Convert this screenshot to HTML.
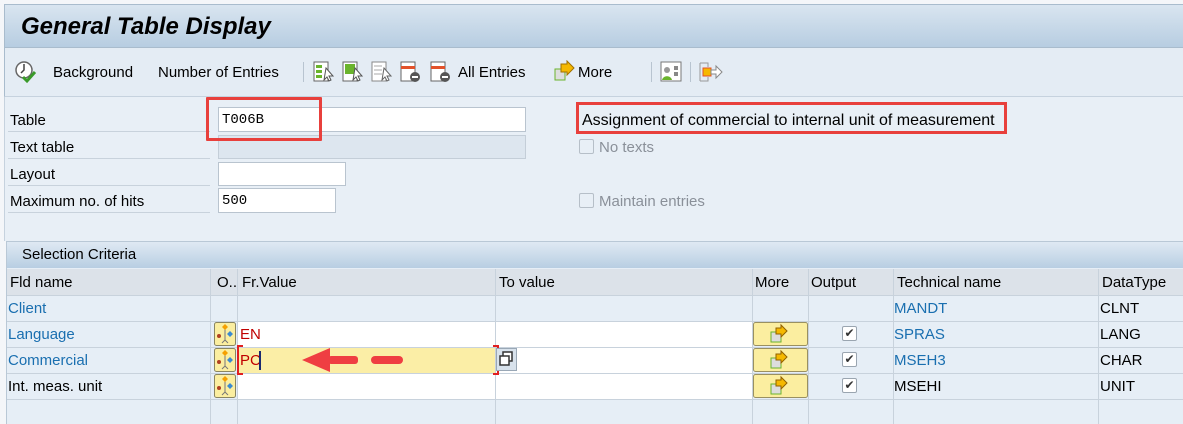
<!DOCTYPE html>
<html><head><meta charset="utf-8"><style>
*{margin:0;padding:0;box-sizing:border-box}
body{width:1183px;height:424px;overflow:hidden;background:#f4f6f9;font-family:"Liberation Sans",Tahoma,sans-serif;font-size:15px;color:#000;position:relative}
.a{position:absolute}
.t{position:absolute;white-space:nowrap;line-height:18px;margin-top:1px}
.lnk{color:#1a6fb0}
.inp{position:absolute;background:#fff;border:1px solid #b9c4cf}
.cb{position:absolute;width:15px;height:15px;border:1px solid #9aa5b0;background:#fff;border-radius:2px;font-size:12px;line-height:13px;text-align:center;color:#333}
.vl{position:absolute;width:1px;background:#c8d2dc}
.hl{position:absolute;height:1px;background:#c8d2dc}
</style></head><body>
<!-- title -->
<div class="a" style="left:4px;top:4px;width:1179px;height:44px;background:linear-gradient(#d9e5f0,#b7cde1);border:1px solid #a9bccd;border-right:none"></div>
<div class="t" style="left:21px;top:12px;font-size:24px;font-weight:bold;font-style:italic;line-height:28px">General Table Display</div>
<!-- toolbar -->
<div class="a" style="left:4px;top:48px;width:1179px;height:49px;background:#e4ecf4;border-left:1px solid #a9bccd;border-bottom:1px solid #c6d2de"></div>
<svg class="a" style="left:14px;top:60px" width="24" height="24" viewBox="0 0 24 24"><circle cx="10" cy="10" r="8" fill="#fff" stroke="#666" stroke-width="1.5"/><path d="M10 4v6l-3 3" stroke="#444" stroke-width="1.5" fill="none"/><path d="M9 17l4 4 8-9" stroke="#3a9a2a" stroke-width="3" fill="none"/></svg>
<div class="t" style="left:53px;top:63px">Background</div>
<div class="t" style="left:158px;top:63px">Number of Entries</div>
<div class="a" style="left:303px;top:62px;width:1px;height:20px;background:#b8c4d0"></div>
<svg class="a" style="left:312px;top:60px" width="150" height="24" viewBox="0 0 150 24">
<rect x="2" y="2" width="14" height="19" fill="#fff" stroke="#666"/><rect x="4" y="5" width="6" height="3" fill="#6ab42c"/><rect x="4" y="10" width="6" height="3" fill="#6ab42c"/><rect x="4" y="15" width="6" height="3" fill="#6ab42c"/><path d="M14 8l7 8h-4l2 4-2 1-2-4-3 3z" fill="#fff" stroke="#555"/>
<rect x="31" y="2" width="14" height="19" fill="#fff" stroke="#666"/><rect x="33" y="4" width="10" height="10" fill="#6ab42c"/><path d="M43 8l7 8h-4l2 4-2 1-2-4-3 3z" fill="#fff" stroke="#555"/>
<rect x="60" y="2" width="14" height="19" fill="#fff" stroke="#888"/><path d="M62 6h8M62 10h8M62 14h8" stroke="#aaa"/><path d="M72 8l7 8h-4l2 4-2 1-2-4-3 3z" fill="#fff" stroke="#666"/>
<rect x="89" y="2" width="14" height="19" fill="#fff" stroke="#666"/><rect x="89" y="6" width="14" height="3" fill="#e2522a"/><circle cx="103" cy="17" r="5" fill="#555"/><path d="M100 17h6" stroke="#fff" stroke-width="2"/>
<rect x="119" y="2" width="14" height="19" fill="#fff" stroke="#666"/><rect x="119" y="6" width="14" height="3" fill="#e2522a"/><circle cx="133" cy="17" r="5" fill="#555"/><path d="M130 17h6" stroke="#fff" stroke-width="2"/>
</svg>
<div class="t" style="left:458px;top:63px">All Entries</div>
<svg class="a" style="left:553px;top:60px" width="22" height="22" viewBox="0 0 22 22"><rect x="2" y="9" width="10" height="11" fill="#ddd" stroke="#6ab42c"/><path d="M8 4h6V1l7 7-7 7v-3H8z" fill="#f5b800" stroke="#a07000"/></svg>
<div class="t" style="left:578px;top:63px">More</div>
<div class="a" style="left:651px;top:62px;width:1px;height:20px;background:#b8c4d0"></div>
<svg class="a" style="left:659px;top:60px" width="24" height="24" viewBox="0 0 24 24"><rect x="2" y="2" width="20" height="19" fill="#fff" stroke="#777"/><circle cx="8" cy="10" r="3" fill="#999"/><path d="M3 20c1-5 9-5 10 0z" fill="#6ab42c"/><rect x="15" y="6" width="4" height="4" fill="#888"/><rect x="15" y="12" width="4" height="4" fill="#888"/></svg>
<div class="a" style="left:690px;top:62px;width:1px;height:20px;background:#b8c4d0"></div>
<svg class="a" style="left:697px;top:60px" width="26" height="24" viewBox="0 0 26 24"><path d="M3 3h8v4M3 21h8v-4M3 3v18" stroke="#999" fill="none"/><rect x="6" y="8" width="8" height="8" fill="#f5b800" stroke="#e2522a"/><path d="M14 10h5V6l6 6-6 6v-4h-5z" fill="#fff" stroke="#888"/></svg>
<!-- form -->
<div class="a" style="left:4px;top:97px;width:1179px;height:144px;background:#e8eff6;border-left:1px solid #c6d2de"></div>
<div class="t" style="left:10px;top:111px">Table</div>
<div class="hl" style="left:8px;top:131px;width:202px"></div>
<div class="t" style="left:10px;top:138px">Text table</div>
<div class="hl" style="left:8px;top:158px;width:202px"></div>
<div class="t" style="left:10px;top:165px">Layout</div>
<div class="hl" style="left:8px;top:185px;width:202px"></div>
<div class="t" style="left:10px;top:192px">Maximum no. of hits</div>
<div class="hl" style="left:8px;top:212px;width:202px"></div>
<div class="inp" style="left:218px;top:107px;width:308px;height:25px"></div>
<div class="t" style="left:222px;top:110px;font-family:'Liberation Mono',monospace;font-size:14px">T006B</div>
<div class="inp" style="left:218px;top:135px;width:308px;height:24px;background:#dde6ef;border-color:#c4ced8"></div>
<div class="inp" style="left:218px;top:162px;width:128px;height:24px"></div>
<div class="inp" style="left:218px;top:188px;width:118px;height:25px"></div>
<div class="t" style="left:222px;top:191px;font-family:'Liberation Mono',monospace;font-size:14px">500</div>
<div class="a" style="left:206px;top:97px;width:116px;height:44px;border:3px solid #e8403c;border-radius:1px"></div>
<div class="t" style="left:582px;top:111px;font-size:16px">Assignment of commercial to internal unit of measurement</div>
<div class="a" style="left:576px;top:102px;width:431px;height:32px;border:3px solid #e8403c"></div>
<div class="cb" style="left:579px;top:139px;background:#e8eff6;border-color:#b6bfc8"></div>
<div class="t" style="left:599px;top:138px;color:#8a9099">No texts</div>
<div class="cb" style="left:579px;top:193px;background:#e8eff6;border-color:#b6bfc8"></div>
<div class="t" style="left:599px;top:192px;color:#8a9099">Maintain entries</div>
<!-- selection panel -->
<div class="a" style="left:6px;top:241px;width:1177px;height:183px;background:#e6eef6;border-left:1px solid #b9c8d6;border-top:1px solid #b9c8d6"></div>
<div class="a" style="left:7px;top:242px;width:1176px;height:26px;background:linear-gradient(#dfe9f3,#b8cee2)"></div>
<div class="t" style="left:22px;top:245px">Selection Criteria</div>
<div class="a" style="left:7px;top:269px;width:1176px;height:26px;background:#dce2e9"></div>
<div class="t" style="left:10px;top:273px">Fld name</div>
<div class="t" style="left:217px;top:273px">O..</div>
<div class="t" style="left:242px;top:273px">Fr.Value</div>
<div class="t" style="left:499px;top:273px">To value</div>
<div class="t" style="left:755px;top:273px">More</div>
<div class="t" style="left:811px;top:273px">Output</div>
<div class="t" style="left:897px;top:273px">Technical name</div>
<div class="t" style="left:1102px;top:273px">DataType</div>
<div class="a" style="left:238px;top:321px;width:514px;height:78px;background:#fff"></div>
<div class="a" style="left:238px;top:347px;width:257px;height:26px;background:#fbeea6"></div>
<div class="hl" style="left:7px;top:295px;width:1176px"></div>
<div class="hl" style="left:7px;top:321px;width:1176px"></div>
<div class="hl" style="left:7px;top:347px;width:1176px"></div>
<div class="hl" style="left:7px;top:373px;width:1176px"></div>
<div class="hl" style="left:7px;top:399px;width:1176px"></div>
<div class="vl" style="left:210px;top:269px;height:155px"></div>
<div class="vl" style="left:237px;top:269px;height:155px"></div>
<div class="vl" style="left:495px;top:269px;height:155px"></div>
<div class="vl" style="left:752px;top:269px;height:155px"></div>
<div class="vl" style="left:808px;top:269px;height:155px"></div>
<div class="vl" style="left:893px;top:269px;height:155px"></div>
<div class="vl" style="left:1098px;top:269px;height:155px"></div>
<div class="t lnk" style="left:8px;top:299px">Client</div>
<div class="t lnk" style="left:8px;top:325px">Language</div>
<div class="t lnk" style="left:8px;top:351px">Commercial</div>
<div class="t" style="left:8px;top:377px">Int. meas. unit</div>
<div class="t lnk" style="left:894px;top:299px">MANDT</div>
<div class="t lnk" style="left:894px;top:325px">SPRAS</div>
<div class="t lnk" style="left:894px;top:351px">MSEH3</div>
<div class="t" style="left:894px;top:377px">MSEHI</div>
<div class="t" style="left:1100px;top:299px">CLNT</div>
<div class="t" style="left:1100px;top:325px">LANG</div>
<div class="t" style="left:1100px;top:351px">CHAR</div>
<div class="t" style="left:1100px;top:377px">UNIT</div>
<div class="t" style="left:240px;top:325px;color:#c00000">EN</div>
<div class="t" style="left:240px;top:351px;color:#c00000">PC</div>
<div class="a" style="left:259px;top:351px;width:2px;height:19px;background:#1a2a70"></div>
<svg width="0" height="0" style="position:absolute"><defs><g id="opt"><rect x="0.5" y="0.5" width="21" height="23" rx="2" fill="#fbeea0" stroke="#8a8560"/><path d="M11 4v14l-3 3M11 18l3 3" stroke="#777" fill="none"/><path d="M11 2l3 3-3 3-3-3z" fill="#f5a000"/><path d="M16 9l3 3-3 3-3-3z" fill="#3a8ad0"/><circle cx="5" cy="14" r="2" fill="#b04020"/></g>
<g id="more"><rect x="0.5" y="0.5" width="54" height="23" rx="2" fill="#fbeea0" stroke="#9a9060"/><rect x="18" y="10" width="10" height="10" fill="#ddd" stroke="#6ab42c"/><path d="M23 6h5V3l6 6-6 6v-3h-5z" fill="#f5b800" stroke="#906000"/></g></defs></svg>
<svg class="a" style="left:214px;top:322px" width="23" height="25"><use href="#opt"/></svg>
<svg class="a" style="left:214px;top:348px" width="23" height="25"><use href="#opt"/></svg>
<svg class="a" style="left:214px;top:374px" width="23" height="25"><use href="#opt"/></svg>
<svg class="a" style="left:753px;top:322px" width="56" height="25"><use href="#more"/></svg>
<svg class="a" style="left:753px;top:348px" width="56" height="25"><use href="#more"/></svg>
<svg class="a" style="left:753px;top:374px" width="56" height="25"><use href="#more"/></svg>
<div class="cb" style="left:842px;top:326px">✔</div>
<div class="cb" style="left:842px;top:352px">✔</div>
<div class="cb" style="left:842px;top:378px">✔</div>
<svg class="a" style="left:237px;top:345px" width="262" height="30"><path d="M6 1H1v28h5M256 1h5v28h-5" stroke="#e02020" stroke-width="2" fill="none"/></svg>
<svg class="a" style="left:496px;top:348px" width="22" height="24"><rect x="0.5" y="0.5" width="20" height="22" fill="#d8e2ec" stroke="#9aa8b6"/><rect x="7" y="4" width="9" height="9" fill="#fff" stroke="#333" stroke-width="1.5"/><rect x="4" y="8" width="9" height="9" fill="#fff" stroke="#333" stroke-width="1.5"/></svg>
<svg class="a" style="left:300px;top:343px" width="110" height="36"><path d="M2 17L30 5v24z" fill="#ef3e42"/><rect x="28" y="13" width="30" height="8" rx="3" fill="#ef3e42"/><rect x="71" y="13" width="32" height="8" rx="4" fill="#ef3e42"/></svg>
</body></html>
